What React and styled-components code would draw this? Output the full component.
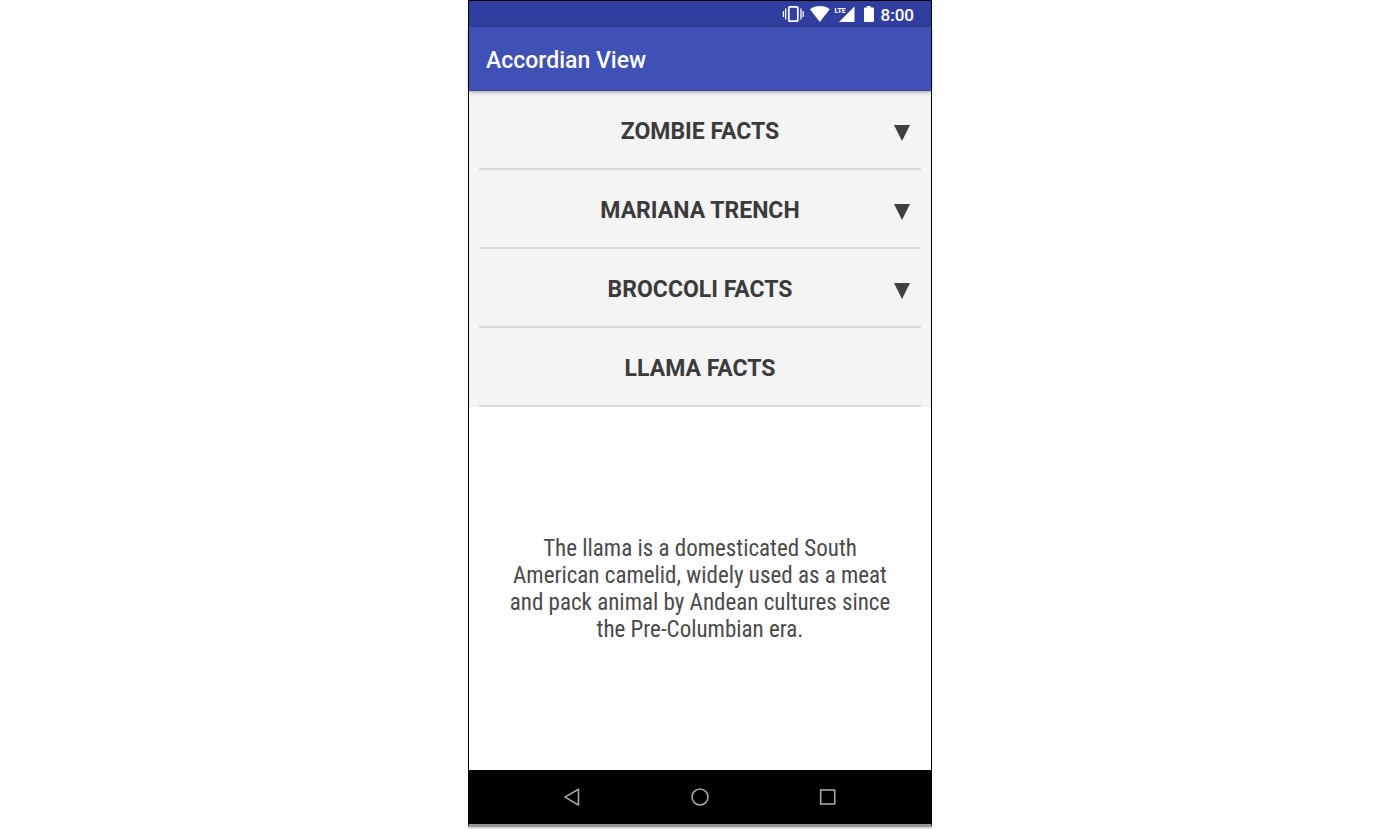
import { useState } from 'react';
import styled, { createGlobalStyle } from 'styled-components';

const GlobalStyle = createGlobalStyle`
  * {
    box-sizing: border-box;
  }
  body {
    margin: 0;
    background: white;
    font-family: Roboto, "Liberation Sans", sans-serif;
  }
`;

const Page = styled.div`
  min-height: 100vh;
  padding-bottom: 2px;
  display: flex;
  justify-content: center;
`;

const Phone = styled.div`
  width: 100%;
  max-width: 464px;
  display: flex;
  flex-direction: column;
  border: 1px solid #000;
  border-bottom: 3px solid #969696;
  background: white;
  box-shadow: 0 2px 0 #dcdcdc;
`;

const StatusBar = styled.div`
  height: 26px;
  padding: 0 17px;
  display: flex;
  align-items: center;
  justify-content: flex-end;
  background: #303f9f;
  color: white;
`;

const StatusIcons = styled.svg`
  width: 100px;
  height: 26px;
  display: block;
`;

const Clock = styled.span`
  font-size: 17px;
  font-weight: 500;
  line-height: 26px;
  padding-top: 2px;
`;

const AppBar = styled.header`
  height: 64px;
  padding: 4px 17px 0;
  display: flex;
  align-items: center;
  background: #3f51b5;
  border-bottom: 1px solid #33439b;
  box-shadow: 0 1px 4px rgba(0, 0, 0, 0.35);
  z-index: 1;
`;

const Title = styled.h1`
  margin: 0;
  color: white;
  font-size: 23px;
  font-weight: 500;
  line-height: 28px;
`;

const Accordion = styled.main`
  flex: 1;
  display: flex;
  flex-direction: column;
`;

const Section = styled.section`
  display: flex;
  flex-direction: column;
  flex: ${(props) => (props.$open ? '1' : 'none')};
`;

const SectionHeading = styled.h2`
  margin: 0;
  padding: 0 10px;
  background: #f4f4f4;
`;

const SectionButton = styled.button`
  width: 100%;
  height: 79px;
  padding: 4px 11px 0;
  display: grid;
  grid-template-columns: 16px 1fr 16px;
  align-items: center;
  border: none;
  border-bottom: 2px solid #dadada;
  background: none;
  color: #3b3b3b;
  font-family: inherit;
  font-size: 23px;
  font-weight: 700;
  line-height: 28px;
  text-transform: uppercase;
  cursor: pointer;
`;

const Label = styled.span`
  grid-column: 2;
`;

const Arrow = styled.svg`
  width: 16px;
  height: 16px;
  margin-top: 3px;
  fill: #404040;
`;

const Panel = styled.div`
  flex: 1;
  padding: 0 40px;
  display: flex;
  align-items: center;
  justify-content: center;
`;

const PanelText = styled.p`
  margin: 0;
  color: #4a4a4a;
  font-family: "Roboto Condensed", Roboto, "Liberation Sans", sans-serif;
  font-size: 23px;
  line-height: 27px;
  text-align: center;
`;

const NavBar = styled.nav`
  height: 54px;
  display: flex;
  align-items: center;
  justify-content: center;
  gap: 104px;
  background: black;
`;

const NavButton = styled.button`
  width: 24px;
  height: 24px;
  padding: 0;
  border: none;
  background: none;
  cursor: pointer;

  svg {
    display: block;
    fill: none;
    stroke: #a6a6a6;
    stroke-width: 1.6;
  }
`;

const sections = [
  { title: 'Zombie Facts', text: 'A zombie is a fictional undead being.' },
  { title: 'Mariana Trench', text: 'The Mariana Trench is the deepest part of the oceans.' },
  { title: 'Broccoli Facts', text: 'Broccoli is an edible green plant in the cabbage family.' },
  {
    title: 'Llama Facts',
    text: 'The llama is a domesticated South American camelid, widely used as a meat and pack animal by Andean cultures since the Pre-Columbian era.',
  },
];

const AccordionSection = ({ title, text, isOpen, onOpen }) => (
  <Section $open={isOpen}>
    <SectionHeading>
      <SectionButton type="button" aria-expanded={isOpen} onClick={onOpen}>
        <Label>{title}</Label>
        {isOpen ? null : (
          <Arrow viewBox="0 0 16 16" aria-hidden="true">
            <path d="M0 0H16L8 16Z" />
          </Arrow>
        )}
      </SectionButton>
    </SectionHeading>
    {isOpen ? (
      <Panel>
        <PanelText>{text}</PanelText>
      </Panel>
    ) : null}
  </Section>
);

export default function App() {
  const [openIndex, setOpenIndex] = useState(3);

  return (
    <>
      <GlobalStyle />
      <Page>
        <Phone>
          <StatusBar>
            {/* vibrate, wifi, LTE signal, battery */}
            <StatusIcons viewBox="-1 0 100 26" fill="white" aria-hidden="true">
              <rect x="6.8" y="5.8" width="9" height="14.4" rx="1" fill="none" stroke="white" strokeWidth="1.7" />
              <path d="M3 7.5h1.3v11H3zM18.3 7.5h1.3v11h-1.3zM.8 10h1.3v6H.8zM20.5 10h1.3v6h-1.3z" />
              <path d="M28 8.2C33.5 3.9 42.5 3.9 47.7 8.2L37.8 21Z" />
              <path d="M72.5 5.5V21H57Z" />
              <text x="52.5" y="12" fontSize="8" fontWeight="700" fontFamily="Roboto Condensed, Roboto, sans-serif">LTE</text>
              <path d="M84.7 5h4v1.5H91q1 0 1 1V20q0 1-1 1h-8q-1 0-1-1V7.5q0-1 1-1h1.7z" />
            </StatusIcons>
            <Clock>8:00</Clock>
          </StatusBar>
          <AppBar>
            <Title>Accordian View</Title>
          </AppBar>
          <Accordion>
            {sections.map((section, index) => (
              <AccordionSection
                key={section.title}
                title={section.title}
                text={section.text}
                isOpen={openIndex === index}
                onOpen={() => setOpenIndex(index)}
              />
            ))}
          </Accordion>
          <NavBar>
            <NavButton type="button" aria-label="Back">
              <svg viewBox="0 0 24 24" width="24" height="24">
                <path d="M18.5 4.2V20L5 12.1Z" strokeLinejoin="round" />
              </svg>
            </NavButton>
            <NavButton type="button" aria-label="Home">
              <svg viewBox="0 0 24 24" width="24" height="24">
                <circle cx="12" cy="12" r="8" />
              </svg>
            </NavButton>
            <NavButton type="button" aria-label="Recent apps">
              <svg viewBox="0 0 24 24" width="24" height="24">
                <rect x="4.7" y="5" width="14" height="14" />
              </svg>
            </NavButton>
          </NavBar>
        </Phone>
      </Page>
    </>
  );
}
